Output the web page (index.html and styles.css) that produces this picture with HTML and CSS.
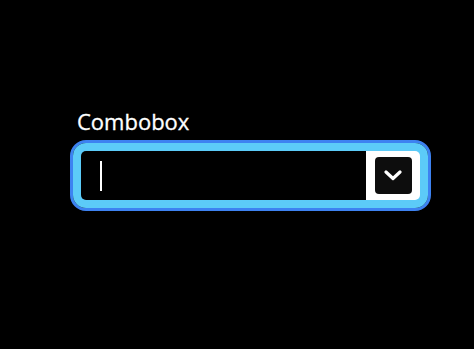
FILE: index.html
```html
<!DOCTYPE html>
<html>
<head>
<meta charset="utf-8">
<link rel="stylesheet" href="styles.css">
</head>
<body>
<div class="page">
  <label class="label" for="cb">Combobox</label>
  <div class="ring">
    <div class="field">
      <div class="input"><span class="caret"></span></div>
      <div class="btn-area">
        <div class="btn">
          <svg width="18" height="11" viewBox="0 0 18 11"><path d="M2 2 L9 8.5 L16 2" fill="none" stroke="#fff" stroke-width="3.2" stroke-linecap="round" stroke-linejoin="round"/></svg>
        </div>
      </div>
    </div>
  </div>
</div>
</body>
</html>
```
FILE: styles.css
```css
html, body {
  margin: 0;
  padding: 0;
  background: #000;
}
.page {
  display: flex;
  flex-direction: column;
  align-items: flex-start;
  padding: 107px 0 0 70px;
  font-family: "Open Sans", "Noto Sans", sans-serif;
}
.label {
  color: #fff;
  font-size: 22px;
  line-height: 28px;
  margin-left: 7px;
  margin-bottom: 5px;
  -webkit-text-stroke: 0.3px #fff;
}
.ring {
  width: 361px;
  box-sizing: border-box;
  border: 3px solid #3d82f1;
  border-radius: 16px;
}
.field {
  display: flex;
  height: 49px;
  border: 8px solid #5ccbf8;
  border-radius: 13px;
  background: #5ccbf8;
}
.input {
  flex: 1;
  display: flex;
  align-items: center;
  padding-left: 19px;
  background: #000;
  border-radius: 5px 0 0 5px;
}
.caret {
  width: 2px;
  height: 30px;
  background: #fff;
}
.btn-area {
  width: 54px;
  display: flex;
  align-items: center;
  justify-content: center;
  background: #fff;
  border-radius: 0 5px 5px 0;
}
.btn {
  width: 37px;
  height: 37px;
  border-radius: 4px;
  background: #0d0d0d;
  display: flex;
  align-items: center;
  justify-content: center;
}
```
